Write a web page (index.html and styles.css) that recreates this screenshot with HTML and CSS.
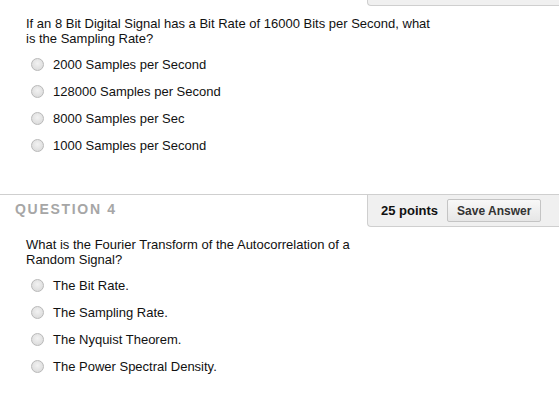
FILE: index.html
```html
<!DOCTYPE html>
<html lang="en">
<head>
    <meta charset="UTF-8">
    <title>Test</title>
    <link rel="stylesheet" href="styles.css">
</head>
<body>
    <div class="q-head q-head-cut">
        <div class="q-tools q-tools-cut"></div>
    </div>
    <div class="q-body">
        <div class="q-text">If an 8 Bit Digital Signal has a Bit Rate of 16000 Bits per Second, what is the Sampling Rate?</div>
        <ul class="answers">
            <li><input type="radio" name="q3"><label>2000 Samples per Second</label></li>
            <li><input type="radio" name="q3"><label>128000 Samples per Second</label></li>
            <li><input type="radio" name="q3"><label>8000 Samples per Sec</label></li>
            <li><input type="radio" name="q3"><label>1000 Samples per Second</label></li>
        </ul>
    </div>

    <div class="q-head">
        <h3 class="q-title">QUESTION 4</h3>
        <div class="q-tools">
            <span class="points">25 points</span>
            <button class="save">Save Answer</button>
        </div>
    </div>
    <div class="q-body">
        <div class="q-text q-text-narrow">What is the Fourier Transform of the Autocorrelation of a Random Signal?</div>
        <ul class="answers">
            <li><input type="radio" name="q4"><label>The Bit Rate.</label></li>
            <li><input type="radio" name="q4"><label>The Sampling Rate.</label></li>
            <li><input type="radio" name="q4"><label>The Nyquist Theorem.</label></li>
            <li><input type="radio" name="q4"><label>The Power Spectral Density.</label></li>
        </ul>
    </div>
</body>
</html>
```

FILE: styles.css
```css
body {
    margin: 0;
    background: #fff;
    font-family: "Liberation Sans", Arial, sans-serif;
    color: #111;
}
.q-head {
    display: flex;
    justify-content: space-between;
    align-items: flex-start;
    border-top: 1px solid #cfcfcf;
}
.q-head-cut {
    border-top: none;
    justify-content: flex-end;
}
.q-title {
    margin: 0;
    padding: 6px 0 0 15px;
    font-size: 14px;
    font-weight: bold;
    letter-spacing: 1.7px;
    color: #a6a6a6;
}
.q-tools {
    width: 192px;
    height: 32px;
    box-sizing: border-box;
    background: #f0f0f0;
    border-left: 1px solid #cfcfcf;
    border-bottom: 1px solid #cfcfcf;
    border-bottom-left-radius: 4px;
    display: flex;
    align-items: center;
    padding-left: 13px;
    gap: 9px;
}
.q-tools-cut {
    height: 6px;
}
.points {
    font-size: 13px;
    font-weight: bold;
}
.save {
    font-family: "Liberation Sans", Arial, sans-serif;
    font-size: 12px;
    font-weight: bold;
    color: #333;
    background: linear-gradient(#f8f8f8, #e6e6e6);
    border: 1px solid #c4c4c4;
    border-radius: 2px;
    height: 23px;
    padding: 0 9px;
}
.q-body {
    padding: 10px 0 35px 26px;
}
.q-text {
    font-size: 13px;
    line-height: 15px;
    width: 412px;
}
.q-text-narrow {
    width: 330px;
}
.answers {
    list-style: none;
    margin: 5px 0 0 0;
    padding: 0 0 0 5px;
}
.answers li {
    display: flex;
    align-items: center;
    height: 27px;
    font-size: 13px;
}
.answers input {
    appearance: none;
    width: 13px;
    height: 13px;
    margin: 0 9px 0 0;
    border-radius: 50%;
    border: 1px solid #b9b9b9;
    background: radial-gradient(circle at 50% 40%, #f2f2f2, #d6d6d6);
}
```
